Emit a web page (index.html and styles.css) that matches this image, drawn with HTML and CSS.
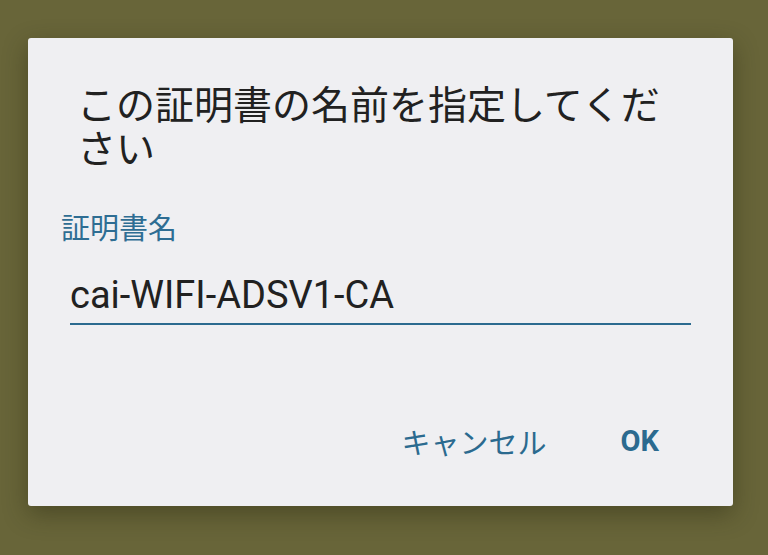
FILE: index.html
```html
<!DOCTYPE html>
<html lang="ja">
<head>
    <meta charset="UTF-8">
    <meta name="viewport" content="width=device-width, initial-scale=1.0">
    <title>証明書名</title>
    <link rel="stylesheet" href="styles.css">
</head>
<body>
    <div class="dialog">
        <h1 class="dialog-title">この証明書の名前を指定してください</h1>
        <label class="field-label" for="cert_name">証明書名</label>
        <input class="field-input" type="text" id="cert_name" value="cai-WIFI-ADSV1-CA">
        <div class="actions">
            <button type="button" class="btn">キャンセル</button>
            <button type="button" class="btn btn-ok">OK</button>
        </div>
    </div>
</body>
</html>
```

FILE: styles.css
```css
html, body {
    margin: 0;
    padding: 0;
    height: 100%;
}
body {
    background-color: #686539;
    font-family: Roboto, "Noto Sans CJK JP", sans-serif;
    overflow: hidden;
}
.dialog {
    box-sizing: border-box;
    width: 705px;
    height: 468px;
    margin: 38px 0 0 28px;
    background-color: #efeff2;
    border-radius: 3px;
    box-shadow: 0 8px 24px rgba(40, 40, 15, 0.45);
    padding: 0 42px 0 42px;
    display: flex;
    flex-direction: column;
}
.dialog-title {
    margin: 42px 0 0 7px;
    font-family: "Noto Sans CJK JP", sans-serif;
    font-weight: normal;
    font-size: 39px;
    line-height: 44px;
    color: #212121;
}
.field-label {
    margin-top: 40px;
    margin-left: -9px;
    font-family: "Noto Sans CJK JP", sans-serif;
    font-size: 29px;
    line-height: 36px;
    color: #2e6d93;
}
.field-input {
    box-sizing: border-box;
    width: 621px;
    margin-top: 29px;
    padding: 0 0 6px 0;
    border: none;
    border-bottom: 2px solid #2b6a8f;
    background: transparent;
    font-family: Roboto, sans-serif;
    font-size: 38px;
    line-height: 44px;
    color: #212121;
    outline: none;
}
.actions {
    display: flex;
    justify-content: flex-end;
    gap: 74px;
    margin-top: auto;
    margin-bottom: 44px;
    padding-right: 32px;
}
.btn {
    border: none;
    background: none;
    padding: 0;
    font-family: "Noto Sans CJK JP", sans-serif;
    font-size: 29px;
    color: #2b6a8f;
    cursor: pointer;
}
.btn-ok {
    font-family: Roboto, sans-serif;
    font-weight: bold;
}
```
